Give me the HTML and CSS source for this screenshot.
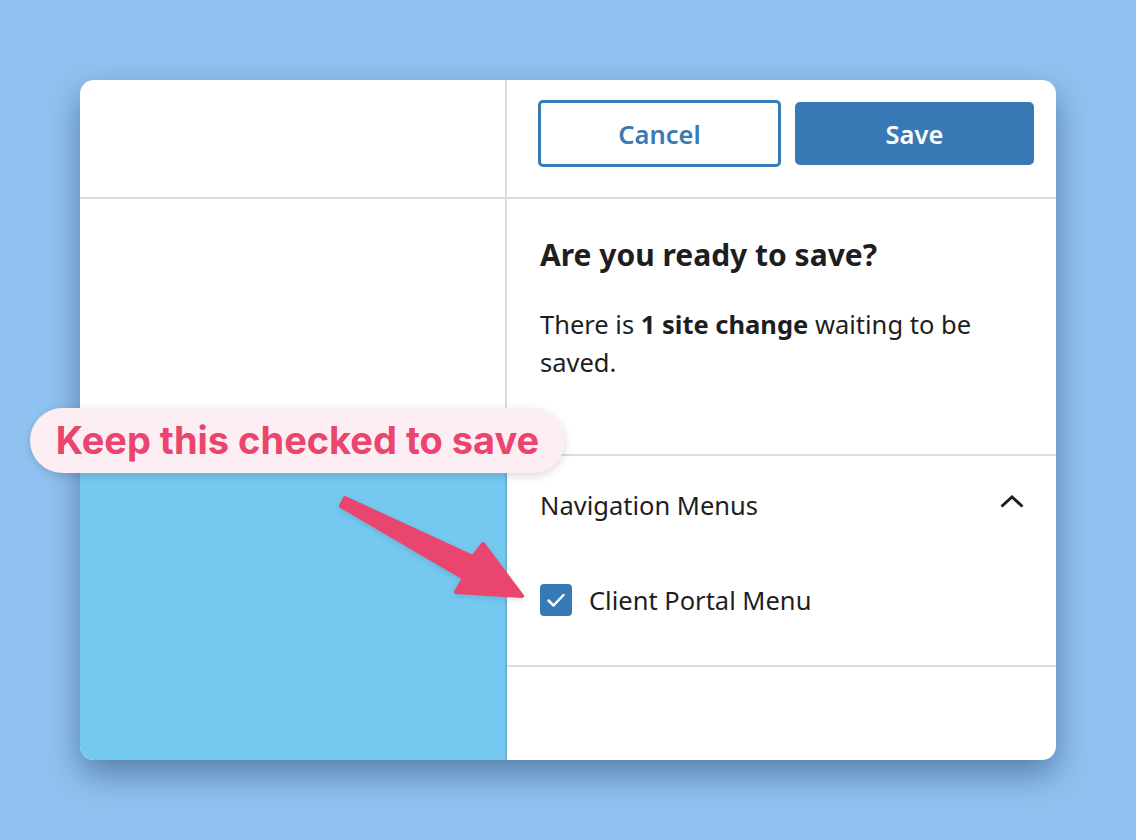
FILE: index.html
```html
<!DOCTYPE html>
<html lang="en">
<head>
    <meta charset="UTF-8">
    <meta name="viewport" content="width=device-width, initial-scale=1.0">
    <title>Save changes</title>
    <link rel="stylesheet" href="styles.css">
</head>
<body>

    <div class="stage">
        <div class="window">
            <div class="side">
                <div class="side-head"></div>
                <div class="side-body"></div>
                <div class="side-fill"></div>
            </div>

            <div class="panel">
                <div class="panel-head">
                    <button class="btn btn-cancel">Cancel</button>
                    <button class="btn btn-save">Save</button>
                </div>

                <div class="intro">
                    <h2>Are you ready to save?</h2>
                    <p>There is <strong>1 site change</strong> waiting to be saved.</p>
                </div>

                <div class="group">
                    <div class="group-title">
                        <span>Navigation Menus</span>
                        <svg class="chevron" width="24" height="14" viewBox="0 0 24 14">
                            <polyline points="1.5,11.5 12,2 22.5,11.5" fill="none" stroke="#1e1e1e" stroke-width="3"/>
                        </svg>
                    </div>
                    <label class="check-row">
                        <span class="checkbox">
                            <svg width="32" height="32" viewBox="0 0 32 32">
                                <polyline points="8.5,16.5 13.5,21.5 23.5,11" fill="none" stroke="#fff" stroke-width="2.5" stroke-linecap="round" stroke-linejoin="round"/>
                            </svg>
                        </span>
                        Client Portal Menu
                    </label>
                </div>
            </div>
        </div>

        <div class="callout">Keep this checked to save</div>

        <!-- pointer from the callout to the checkbox -->
        <svg class="arrow" width="1136" height="840" viewBox="0 0 1136 840">
            <polygon points="345,498 473,557 483,544 522,596 456,592 464,578 341,506"
                     fill="#e9456e" stroke="#e9456e" stroke-width="4" stroke-linejoin="round"/>
        </svg>
    </div>

</body>
</html>
```

FILE: styles.css
```css
body {
    margin: 0;
    background-color: #91c3f2;
    font-family: 'Noto Sans', 'Open Sans', sans-serif;
    color: #1e1e1e;
}
.stage {
    position: relative;
    width: 1136px;
    height: 840px;
    padding: 80px 0 0 80px;
    box-sizing: border-box;
}
.window {
    width: 976px;
    height: 680px;
    display: grid;
    grid-template-columns: 427px 1fr;
    background: #fff;
    border-radius: 14px;
    overflow: hidden;
    box-shadow: 0 14px 34px rgba(25, 55, 95, 0.5);
}

/* left column */
.side {
    display: flex;
    flex-direction: column;
}
.side-head {
    height: 117px;
    border-bottom: 2px solid #dcdcdc;
    border-right: 2px solid #dcdcdc;
}
.side-body {
    height: 257px;
    border-right: 2px solid #dcdcdc;
}
.side-fill {
    flex: 1;
    background-color: #75c9f0;
    border-right: 2px solid #6ab2d6;
}

/* right column */
.panel {
    display: flex;
    flex-direction: column;
}
.panel-head {
    height: 119px;
    box-sizing: border-box;
    border-bottom: 2px solid #dcdcdc;
    display: flex;
    align-items: flex-start;
    gap: 14px;
    padding: 20px 0 0 31px;
}
.btn {
    font-family: 'Noto Sans', sans-serif;
    font-size: 25.5px;
    font-weight: 600;
    border-radius: 5px;
    cursor: pointer;
}
.btn-cancel {
    width: 243px;
    height: 67px;
    background: #fff;
    color: #3a7ab5;
    border: 3px solid #3a7ab5;
}
.btn-save {
    width: 239px;
    height: 63px;
    margin-top: 2px;
    background-color: #3779b4;
    color: #fff;
    border: none;
}
.intro {
    height: 257px;
    border-bottom: 2px solid #dcdcdc;
    padding: 36px 30px 0 33px;
    box-sizing: border-box;
}
.intro h2 {
    margin: 0;
    font-size: 30px;
    line-height: 40px;
    font-weight: 700;
}
.intro p {
    margin: 30px 0 0;
    font-size: 25.5px;
    line-height: 38px;
}
.group {
    height: 211px;
    border-bottom: 2px solid #dcdcdc;
    padding: 0 32px 0 33px;
    box-sizing: border-box;
}
.group-title {
    height: 98px;
    display: flex;
    align-items: center;
    justify-content: space-between;
    font-size: 25.5px;
}
.chevron {
    margin-top: -6px;
}
.check-row {
    margin-top: 29px;
    display: flex;
    align-items: center;
    gap: 17px;
    font-size: 25.5px;
}
.checkbox {
    width: 32px;
    height: 32px;
    border-radius: 4px;
    background-color: #3779b4;
    display: flex;
}

/* annotation */
.callout {
    position: absolute;
    left: 30px;
    top: 408px;
    width: 535px;
    height: 65px;
    box-sizing: border-box;
    border-radius: 33px;
    background-color: #fdeef3;
    box-shadow: 0 3px 10px rgba(0, 0, 0, 0.15);
    color: #e9456e;
    font-family: 'Inter', sans-serif;
    font-size: 38px;
    font-weight: 700;
    line-height: 65px;
    text-align: center;
}
.arrow {
    position: absolute;
    left: 0;
    top: 0;
    filter: drop-shadow(0 2px 3px rgba(0, 0, 0, 0.12));
}
```
